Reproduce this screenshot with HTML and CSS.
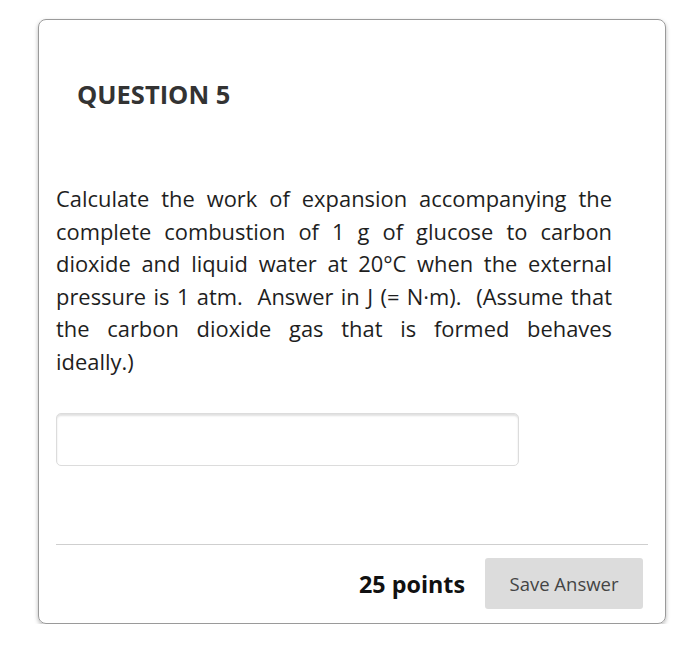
FILE: index.html
```html
<!DOCTYPE html>
<html>
<head>
<meta charset="utf-8">
<link rel="stylesheet" href="styles.css">
</head>
<body>
<div class="card">
  <h2 class="title">QUESTION 5</h2>
  <p class="question">Calculate the work of expansion accompanying the complete combustion of 1 g of glucose to carbon dioxide and liquid water at 20°C when the external pressure is 1 atm.&nbsp; Answer in J (= N·m).&nbsp; (Assume that the carbon dioxide gas that is formed behaves ideally.)</p>
  <div class="answer"></div>
  <div class="footer">
    <span class="points">25 points</span>
    <button class="save">Save Answer</button>
  </div>
</div>
</body>
</html>
```
FILE: styles.css
```css
html, body {
  margin: 0;
  padding: 0;
  background: #fff;
}
body {
  font-family: "Open Sans", sans-serif;
  padding: 19px 0 0 38px;
}
.card {
  box-sizing: border-box;
  width: 628px;
  height: 605px;
  border: 1px solid #9a9a9a;
  border-radius: 8px;
  box-shadow: 0 2px 4px rgba(0,0,0,0.28);
  padding: 0 17px;
  display: flex;
  flex-direction: column;
}
.title {
  margin: 57px 0 0 21px;
  font-size: 25.5px;
  font-weight: 700;
  color: #333;
  line-height: 34px;
}
.question {
  margin: 72px 0 0 0;
  width: 556px;
  font-size: 21.9px;
  line-height: 32.5px;
  word-spacing: 0.5px;
  color: #1e1e1e;
  text-align: justify;
}
.answer {
  margin-top: 35px;
  width: 463px;
  height: 53px;
  box-sizing: border-box;
  border: 1px solid #dcdcdc;
  border-radius: 5px;
  box-shadow: inset 0 2px 2px rgba(0,0,0,0.12);
}
.footer {
  margin-top: 78px;
  border-top: 1px solid #cfcfcf;
  display: flex;
  justify-content: flex-end;
  align-items: center;
  padding-top: 13px;
  gap: 20px;
}
.points {
  font-size: 23.3px;
  font-weight: 700;
  color: #111;
}
.save {
  font-family: "Open Sans", sans-serif;
  font-size: 18.5px;
  color: #444;
  background: #dcdcdc;
  border: none;
  border-radius: 3px;
  width: 158px;
  height: 51px;
  margin-right: 5px;
  padding: 0;
}
```
